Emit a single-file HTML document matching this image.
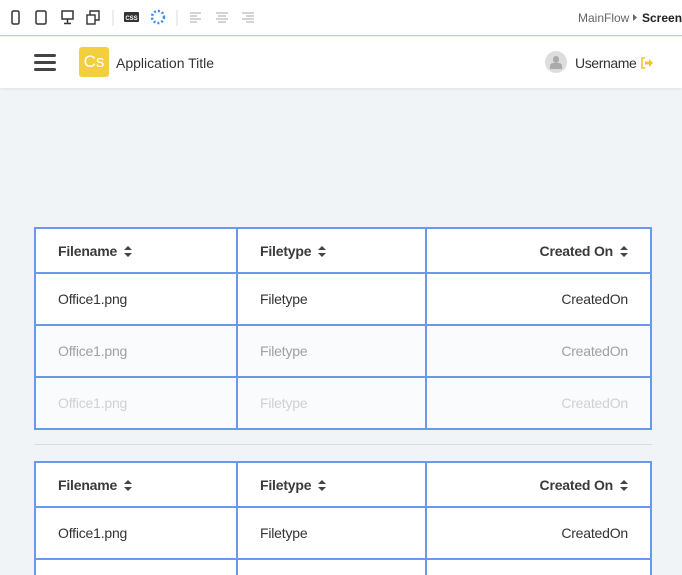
<!DOCTYPE html>
<html><head><style>
*{box-sizing:border-box;margin:0;padding:0}
html,body{width:682px;height:575px;overflow:hidden}
body{background:#f1f4f7;font-family:"Liberation Sans","DejaVu Sans",sans-serif;position:relative}
.tb{position:absolute;left:0;top:0;width:682px;height:36px;background:#fff;border-bottom:1px solid #b7cff0}
.hd{position:absolute;left:0;top:37px;width:682px;height:51px;background:#fff;box-shadow:0 1px 3px rgba(0,0,0,.08)}
.wrap{position:absolute;left:0;top:0;width:682px;height:575px;overflow:hidden}
table{position:absolute;left:34px;width:618px;border-collapse:collapse;background:#fff;font-size:14px;color:#333;letter-spacing:-0.2px}
td,th{border:2px solid #6a98ea;height:52px;padding:0 22px;text-align:left;font-weight:normal}
th{height:45px;font-weight:bold;color:#3a3a3a}
.r{text-align:right}
tr.f1 td{color:#a0a0a0;background:#fafbfc}
tr.f2 td{color:#d0d0d0;background:#fafbfc}
.s{display:inline-block;width:8px;height:11px;margin-left:7px;vertical-align:-1px;position:relative}
.s:before,.s:after{content:"";position:absolute;left:0;border-left:4px solid transparent;border-right:4px solid transparent}
.s:before{top:0;border-bottom:4px solid #444}
.s:after{bottom:0;border-top:4px solid #444}
</style></head><body><div class="wrap">
<div class="tb">
<svg width="682" height="36" style="position:absolute;left:0;top:0">
<rect x="12" y="11" width="7" height="13" rx="1.5" fill="none" stroke="#333" stroke-width="1.5"/>
<rect x="36" y="11" width="10" height="13" rx="1.5" fill="none" stroke="#333" stroke-width="1.5"/>
<rect x="62" y="11" width="11" height="8" fill="none" stroke="#333" stroke-width="1.5"/><path d="M67.5 19v4M64 23.5h7" stroke="#333" stroke-width="1.5"/>
<rect x="87" y="15" width="8" height="9" fill="none" stroke="#333" stroke-width="1.4"/><path d="M90 15v-4h9v9h-4" fill="none" stroke="#333" stroke-width="1.4"/>
<line x1="113" y1="10" x2="113" y2="26" stroke="#ddd"/>
<rect x="124" y="12" width="15" height="10" rx="1" fill="#333"/><text x="131.5" y="20" font-size="6" fill="#fff" text-anchor="middle" font-family="Liberation Sans" font-weight="bold">CSS</text>
<circle cx="158" cy="17" r="6" fill="none" stroke="#3b8ee8" stroke-width="2.5" stroke-dasharray="2 2"/>
<line x1="177" y1="10" x2="177" y2="26" stroke="#ddd"/>
<path d="M190 13h11M190 16h7M190 19h11M190 22h7M216 13h12M218 16h8M216 19h12M218 22h8M242 13h12M246 16h8M242 19h12M246 22h8" stroke="#aaa" stroke-width="1"/>
<text x="578" y="22" font-size="12" fill="#666" font-family="Liberation Sans">MainFlow</text>
<path d="M633 14l4 3.5-4 3.5z" fill="#666"/>
<text x="642" y="22" font-size="12" fill="#222" font-weight="bold" font-family="Liberation Sans">Screen1</text>
</svg></div>
<div class="hd">
<div style="position:absolute;left:34px;top:17px;width:22px;height:3px;background:#444;border-radius:2px;box-shadow:0 7px 0 #444,0 14px 0 #444"></div>
<div style="position:absolute;left:79px;top:10px;width:30px;height:30px;background:#f4cf3d;border-radius:3px;color:#fff;font-size:17px;line-height:30px;text-align:center">Cs</div>
<div style="position:absolute;left:116px;top:18px;font-size:14px;color:#333">Application Title</div>
<div style="position:absolute;left:545px;top:14px;width:22px;height:22px;border-radius:50%;background:#ddd;overflow:hidden"><div style="position:absolute;left:8px;top:5px;width:6px;height:7px;border-radius:3px;background:#aaa"></div><div style="position:absolute;left:5px;top:12px;width:12px;height:6px;border-radius:3px 3px 0 0;background:#aaa"></div></div>
<div style="position:absolute;left:575px;top:18px;font-size:14px;color:#333;letter-spacing:-0.4px">Username</div>
<svg width="14" height="12" style="position:absolute;left:640px;top:20px"><path d="M5 1H2v10h3" fill="none" stroke="#f4c430" stroke-width="1.6"/><path d="M5 4.5h4V2l4 4-4 4V7.5H5z" fill="#f4c430"/></svg>
</div>
<table style="top:227px">
<tr><th style="width:202px">Filename<span class="s"></span></th><th style="width:189px">Filetype<span class="s"></span></th><th class="r">Created On<span class="s"></span></th></tr>
<tr><td>Office1.png</td><td>Filetype</td><td class="r">CreatedOn</td></tr>
<tr class="f1"><td>Office1.png</td><td>Filetype</td><td class="r">CreatedOn</td></tr>
<tr class="f2"><td>Office1.png</td><td>Filetype</td><td class="r">CreatedOn</td></tr>
</table>
<div style="position:absolute;left:34px;top:444px;width:618px;height:1px;background:#d8dce0"></div>
<table style="top:461px">
<tr><th style="width:202px">Filename<span class="s"></span></th><th style="width:189px">Filetype<span class="s"></span></th><th class="r">Created On<span class="s"></span></th></tr>
<tr><td>Office1.png</td><td>Filetype</td><td class="r">CreatedOn</td></tr>
<tr><td>&nbsp;</td><td></td><td></td></tr>
</table>
</div></body></html>
